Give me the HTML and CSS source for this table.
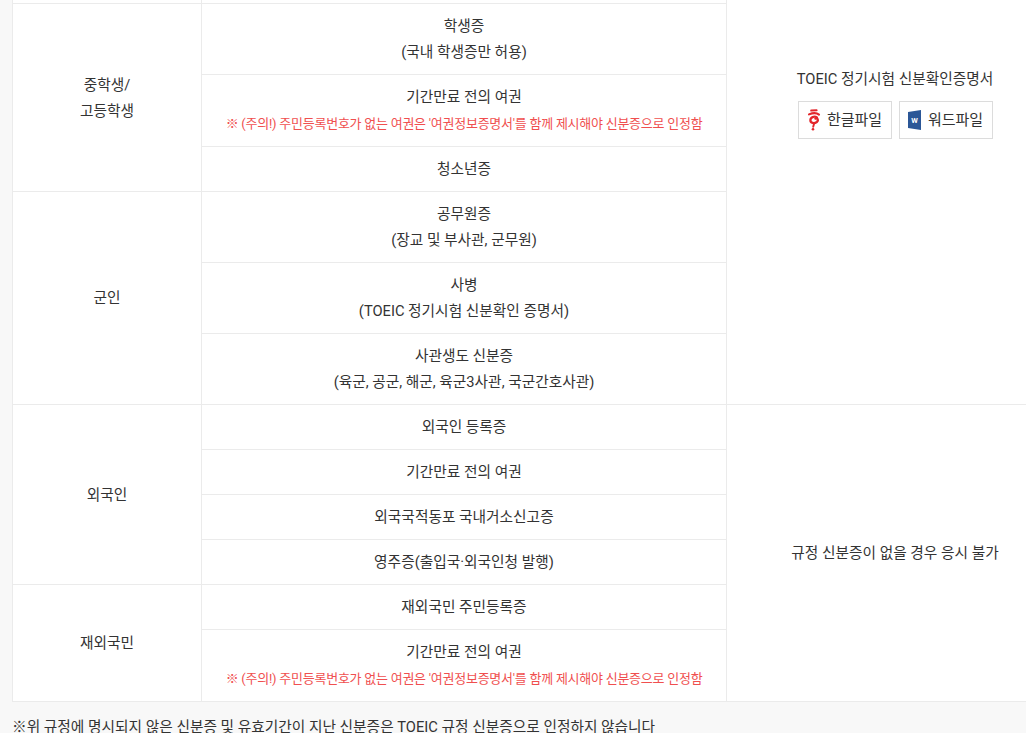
FILE: index.html
```html
<!DOCTYPE html>
<html lang="ko">
<head>
<meta charset="utf-8">
<title>신분증 규정</title>
<link rel="stylesheet" href="styles.css">
</head>
<body>
<div class="page">
  <table class="id-table">
    <colgroup>
      <col class="c-cat">
      <col class="c-doc">
      <col class="c-etc">
    </colgroup>
    <tbody>
      <tr class="prev">
        <td class="cat">초등학생</td>
        <td class="doc">학생증</td>
        <td class="etc" rowspan="7">
          <p class="etc-title">TOEIC 정기시험 신분확인증명서</p>
          <div class="files">
            <a class="file-btn" href="#">
              <svg class="ico" width="14" height="22" viewBox="0 0 14 22" aria-hidden="true">
                <path d="M4.2 1.6 L9.6 1.2" stroke="#e3262b" stroke-width="2" stroke-linecap="round" fill="none"/>
                <path d="M2 5.4 C5 4.2 9.6 3.8 12 5.6" stroke="#e3262b" stroke-width="2.1" stroke-linecap="round" fill="none"/>
                <path d="M10 8.4 C7.2 6.8 3.4 8.2 3.4 11.2 C3.4 14.2 7.2 15 9.8 13 C12 11.2 10.6 8.8 8.4 9.6" stroke="#e3262b" stroke-width="2.3" stroke-linecap="round" fill="none"/>
                <path d="M7 15 L6.2 17.8" stroke="#e3262b" stroke-width="1.9" stroke-linecap="round"/>
                <circle cx="6" cy="20.2" r="1.3" fill="#e3262b"/>
              </svg>
              <span>한글파일</span>
            </a>
            <a class="file-btn" href="#">
              <svg class="ico" width="14" height="20" viewBox="0 0 14 20" aria-hidden="true">
                <path d="M0 2 L13 0 L13 20 L0 18 Z" fill="#2b5797"/>
                <text x="6.6" y="13" font-family="Roboto, Arial, sans-serif" font-size="7.5" font-weight="700" fill="#fff" text-anchor="middle">W</text>
              </svg>
              <span>워드파일</span>
            </a>
          </div>
        </td>
      </tr>
      <tr>
        <td class="cat" rowspan="3">중학생/<br>고등학생</td>
        <td class="doc">학생증<br>(국내 학생증만 허용)</td>
      </tr>
      <tr>
        <td class="doc">기간만료 전의 여권<p class="note">※ (주의!) 주민등록번호가 없는 여권은 '여권정보증명서'를 함께 제시해야 신분증으로 인정함</p></td>
      </tr>
      <tr>
        <td class="doc">청소년증</td>
      </tr>
      <tr>
        <td class="cat" rowspan="3">군인</td>
        <td class="doc">공무원증<br>(장교 및 부사관, 군무원)</td>
      </tr>
      <tr>
        <td class="doc">사병<br>(TOEIC 정기시험 신분확인 증명서)</td>
      </tr>
      <tr>
        <td class="doc">사관생도 신분증<br>(육군, 공군, 해군, 육군3사관, 국군간호사관)</td>
      </tr>
      <tr>
        <td class="cat" rowspan="4">외국인</td>
        <td class="doc">외국인 등록증</td>
        <td class="etc" rowspan="6">규정 신분증이 없을 경우 응시 불가</td>
      </tr>
      <tr>
        <td class="doc">기간만료 전의 여권</td>
      </tr>
      <tr>
        <td class="doc">외국국적동포 국내거소신고증</td>
      </tr>
      <tr>
        <td class="doc">영주증(출입국·외국인청 발행)</td>
      </tr>
      <tr>
        <td class="cat" rowspan="2">재외국민</td>
        <td class="doc">재외국민 주민등록증</td>
      </tr>
      <tr>
        <td class="doc">기간만료 전의 여권<p class="note">※ (주의!) 주민등록번호가 없는 여권은 '여권정보증명서'를 함께 제시해야 신분증으로 인정함</p></td>
      </tr>
    </tbody>
  </table>
  <p class="footnote">※위 규정에 명시되지 않은 신분증 및 유효기간이 지난 신분증은 TOEIC 규정 신분증으로 인정하지 않습니다</p>
</div>
</body>
</html>
```

FILE: styles.css
```css
html, body {
  margin: 0;
  padding: 0;
  background: #f8f8f8;
  overflow: hidden;
}

body {
  font-family: Roboto, "Noto Sans CJK KR", sans-serif;
  color: #333;
  font-size: 14.7px;
}

.page {
  padding-left: 12px;
  height: 733px;
  overflow: hidden;
}

.id-table {
  margin-top: -201px;
  width: 1051px;
  table-layout: fixed;
  border-collapse: collapse;
  background: #fff;
}

.c-cat { width: 189px; }
.c-doc { width: 525px; }
.c-etc { width: 337px; }

.id-table td {
  border: 1px solid #ebebeb;
  padding: 9px 10px;
  line-height: 26px;
  text-align: center;
  vertical-align: middle;
}

.prev td.cat,
.prev td.doc {
  height: 185px;
}

.note {
  margin: 1px 0 0;
  font-size: 13px;
  line-height: 26px;
  color: #f04f4f;
  letter-spacing: -0.25px;
}

.etc-title {
  margin: 0;
  line-height: 26px;
}

.files {
  display: flex;
  justify-content: center;
  gap: 7px;
  margin-top: 9px;
}

.file-btn {
  display: flex;
  align-items: center;
  justify-content: center;
  gap: 6px;
  width: 92px;
  height: 36px;
  border: 1px solid #dcdcdc;
  background: #fff;
  color: #333;
  text-decoration: none;
  font-size: 15px;
}

.ico { display: block; }

.footnote {
  margin: 14px 0 0;
  font-size: 14.7px;
  line-height: 22px;
}
```
